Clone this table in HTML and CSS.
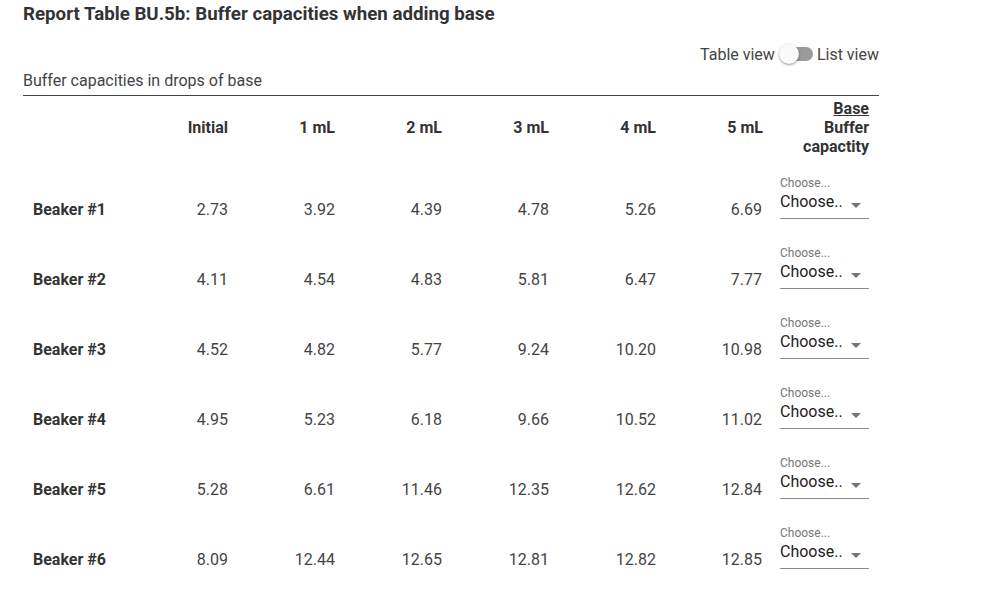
FILE: index.html
```html
<!DOCTYPE html>
<html>
<head>
<meta charset="utf-8">
<link rel="stylesheet" href="styles.css">
</head>
<body>
<div class="page">
  <h1 class="title">Report Table BU.5b: Buffer capacities when adding base</h1>
  <div class="toggle-row">
    <span class="toggle-label">Table view</span>
    <span class="switch"><span class="track"></span><span class="thumb"></span></span>
    <span class="toggle-label">List view</span>
  </div>
  <div class="caption">Buffer capacities in drops of base</div>
  <table class="data">
    <thead>
      <tr>
        <th></th><th>Initial</th><th>1 mL</th><th>2 mL</th><th>3 mL</th><th>4 mL</th><th>5 mL</th>
        <th class="last"><span class="u">Base</span><br>Buffer<br>capactity</th>
      </tr>
    </thead>
    <tbody>
      <tr><td class="name">Beaker #1</td><td>2.73</td><td>3.92</td><td>4.39</td><td>4.78</td><td>5.26</td><td>6.69</td><td class="sel-cell"><div class="select"><div class="sel-label">Choose...</div><div class="sel-input"><span>Choose..</span><span class="arrow"></span></div></div></td></tr>
      <tr><td class="name">Beaker #2</td><td>4.11</td><td>4.54</td><td>4.83</td><td>5.81</td><td>6.47</td><td>7.77</td><td class="sel-cell"><div class="select"><div class="sel-label">Choose...</div><div class="sel-input"><span>Choose..</span><span class="arrow"></span></div></div></td></tr>
      <tr><td class="name">Beaker #3</td><td>4.52</td><td>4.82</td><td>5.77</td><td>9.24</td><td>10.20</td><td>10.98</td><td class="sel-cell"><div class="select"><div class="sel-label">Choose...</div><div class="sel-input"><span>Choose..</span><span class="arrow"></span></div></div></td></tr>
      <tr><td class="name">Beaker #4</td><td>4.95</td><td>5.23</td><td>6.18</td><td>9.66</td><td>10.52</td><td>11.02</td><td class="sel-cell"><div class="select"><div class="sel-label">Choose...</div><div class="sel-input"><span>Choose..</span><span class="arrow"></span></div></div></td></tr>
      <tr><td class="name">Beaker #5</td><td>5.28</td><td>6.61</td><td>11.46</td><td>12.35</td><td>12.62</td><td>12.84</td><td class="sel-cell"><div class="select"><div class="sel-label">Choose...</div><div class="sel-input"><span>Choose..</span><span class="arrow"></span></div></div></td></tr>
      <tr><td class="name">Beaker #6</td><td>8.09</td><td>12.44</td><td>12.65</td><td>12.81</td><td>12.82</td><td>12.85</td><td class="sel-cell"><div class="select"><div class="sel-label">Choose...</div><div class="sel-input"><span>Choose..</span><span class="arrow"></span></div></div></td></tr>
    </tbody>
  </table>
</div>
</body>
</html>
```
FILE: styles.css
```css
html, body {
  margin: 0;
  padding: 0;
  background: #fff;
}
body {
  font-family: Roboto, "Liberation Sans", sans-serif;
  color: #333;
}
.page {
  width: 856px;
  padding-left: 23px;
}
.title {
  margin: 0;
  padding-top: 2px;
  font-size: 18.72px;
  line-height: 24px;
  font-weight: 700;
  color: #333;
}
.toggle-row {
  display: flex;
  justify-content: flex-end;
  align-items: center;
  margin-top: 18px;
  height: 20px;
  font-size: 16px;
  color: #444;
}
.switch {
  position: relative;
  width: 34px;
  height: 20px;
  margin: 0 4px 0 4px;
}
.track {
  position: absolute;
  left: 4px;
  top: 3px;
  width: 30px;
  height: 14px;
  border-radius: 7px;
  background: #9b9b9b;
}
.thumb {
  position: absolute;
  left: 0;
  top: 0;
  width: 20px;
  height: 20px;
  border-radius: 50%;
  background: #fafafa;
  box-shadow: 0 1px 3px rgba(0,0,0,0.3), 0 1px 1px rgba(0,0,0,0.14);
}
.caption {
  margin-top: 7px;
  font-size: 16px;
  line-height: 20px;
  padding-bottom: 4px;
  border-bottom: 1px solid #444;
  color: #444;
}
.data {
  width: 856px;
  border-collapse: collapse;
  table-layout: fixed;
  font-size: 16px;
}
.data th {
  font-weight: 700;
  text-align: right;
  padding: 3px 10px 0 10px;
  line-height: 19px;
  height: 78px;
  box-sizing: border-box;
  vertical-align: top;
  color: #333;
}
.data th:not(.last) {
  padding-top: 22px;
  padding-right: 9px;
}
.data th .u {
  text-decoration: underline;
}
.data td {
  text-align: right;
  padding: 0 9px 0 10px;
  height: 70px;
  box-sizing: border-box;
  vertical-align: middle;
  line-height: 19px;
  color: #444;
}
.data td:nth-child(7) {
  padding-right: 10px;
}
.data td.name {
  text-align: left;
  font-weight: 700;
  color: #333;
}
.data td.sel-cell {
  vertical-align: top;
  text-align: left;
  padding: 2px 10px 0 8px;
}
.select {
  display: flex;
  flex-direction: column;
}
.sel-label {
  font-size: 12px;
  line-height: 14px;
  color: #777;
}
.sel-input {
  display: flex;
  align-items: flex-start;
  justify-content: space-between;
  margin-top: 2px;
  height: 19px;
  line-height: 19px;
  font-size: 16px;
  color: #222;
  border-bottom: 1px solid #8c8c8c;
  padding-bottom: 7px;
}
.arrow {
  width: 0;
  height: 0;
  border-left: 5px solid transparent;
  border-right: 5px solid transparent;
  border-top: 5px solid #757575;
  margin-right: 8px;
  margin-top: 11px;
}
```
